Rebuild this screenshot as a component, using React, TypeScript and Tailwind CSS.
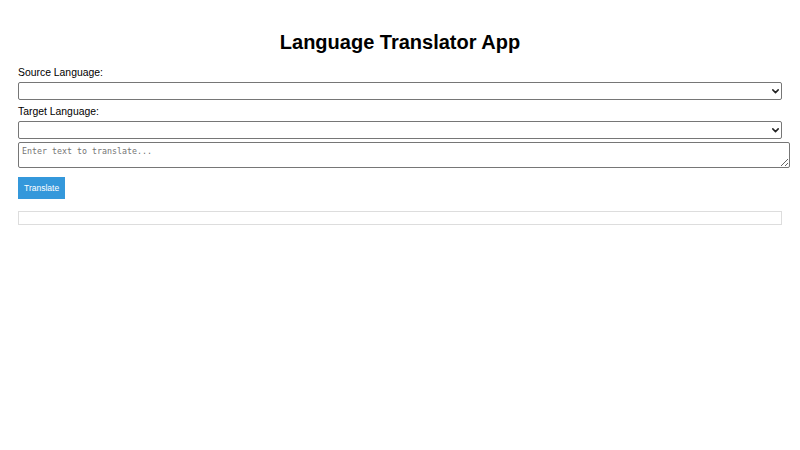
import React from "react";

function LanguageSelect() {
  return (
    <div className="relative mt-[3px] h-[18px] w-full">
      <select className="block h-full w-full appearance-none rounded-[2px] border border-[#767676] bg-white text-[8.3px]">
        <option></option>
      </select>
      <svg
        className="pointer-events-none absolute right-[3px] top-[7px]"
        width="7"
        height="5"
        viewBox="0 0 7 5"
        fill="none"
      >
        <path d="M0.8 0.9 L3.5 3.6 L6.2 0.9" stroke="#222" strokeWidth="1.5" strokeLinecap="round" strokeLinejoin="round" />
      </svg>
    </div>
  );
}

export default function App() {
  return (
    <div className="min-h-[450px] w-full bg-white px-[18px] font-['Liberation_Sans',Arial,sans-serif] text-black">
      <h1 className="pt-[31px] text-center text-[20px] font-bold leading-[23px]">
        Language Translator App
      </h1>

      <label className="mt-[13px] block text-[10.4px] leading-[12px]">Source Language:</label>
      <LanguageSelect />

      <label className="mt-[6px] block text-[10.4px] leading-[12px]">Target Language:</label>
      <LanguageSelect />

      <textarea
        placeholder="Enter text to translate..."
        className="mt-[3px] block h-[26px] w-[calc(100%+8px)] rounded-[2px] border border-[#767676] px-[3px] pt-[3px] font-['DejaVu_Sans_Mono',monospace] text-[8.3px] leading-[10px] placeholder:text-[#757575]"
      />

      <button className="mt-[9px] block h-[22px] bg-[#3498db] px-[6px] text-[8.5px] text-white">
        Translate
      </button>

      <div className="mt-[12px] h-[14px] w-full border border-[#dddddd]" />
    </div>
  );
}
